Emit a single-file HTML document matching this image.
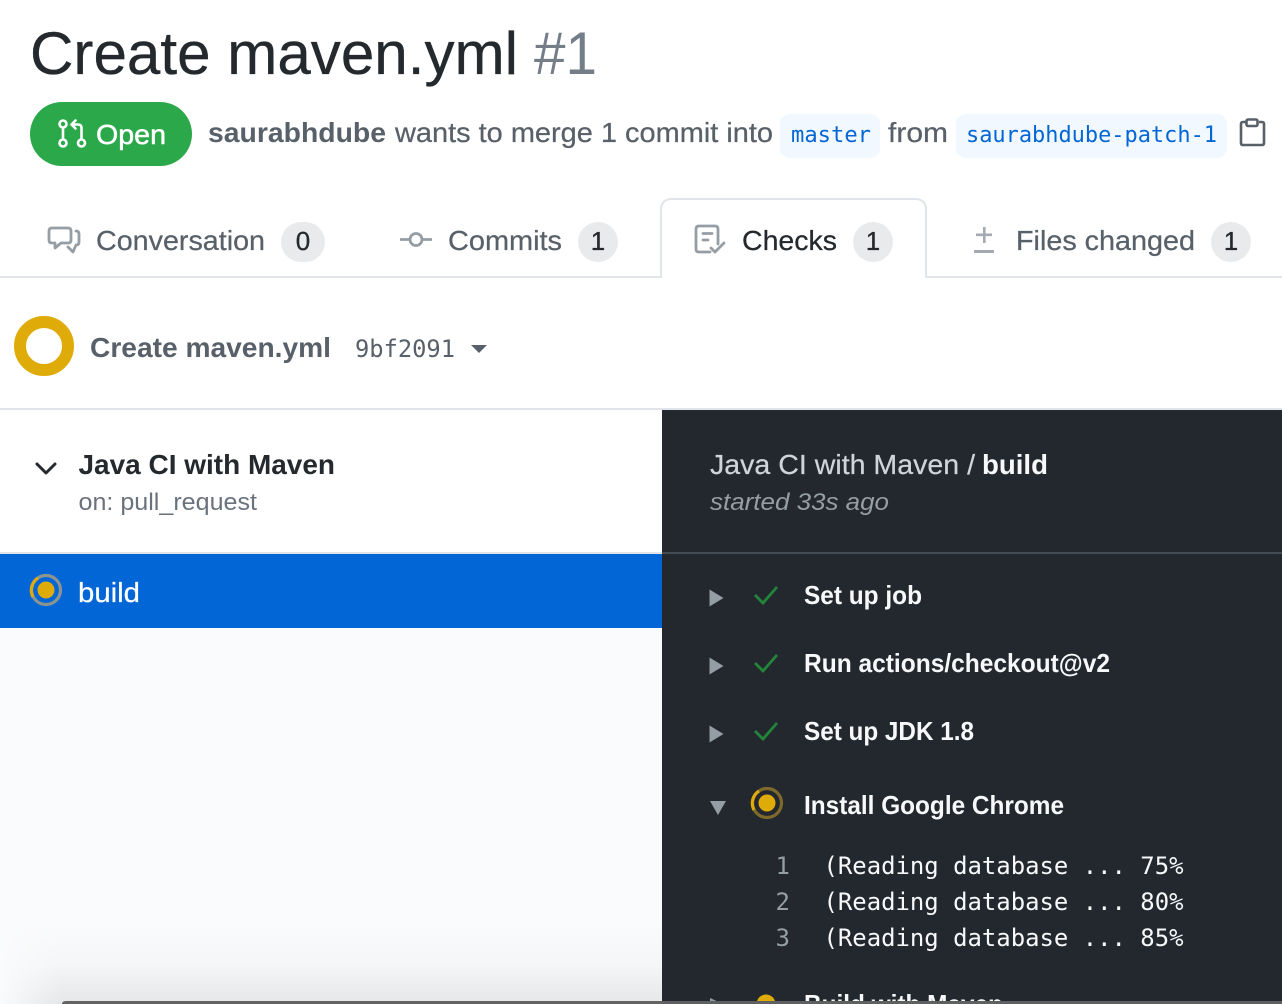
<!DOCTYPE html>
<html><head><meta charset="utf-8"><title>Create maven.yml #1</title>
<style>
html,body{margin:0;padding:0;background:#fff;width:1282px;height:1004px;overflow:hidden}
svg{display:block}
text{font-family:"Liberation Sans",sans-serif;white-space:pre}
.m{font-family:"DejaVu Sans Mono","Liberation Mono",monospace}
.t{font-size:28px;fill:#586069;stroke:#586069;stroke-width:.25px}
.c{font-size:26px;fill:#24292e;text-anchor:middle;stroke:#24292e;stroke-width:.3px}
.s{font-size:26px;font-weight:700;fill:#f6f8fa}
.n{font-size:24px;fill:#959da5;text-anchor:end}
.l{font-size:24px;fill:#f6f8fa}
</style></head><body>
<svg width="1282" height="1004" viewBox="0 0 1282 1004" xmlns="http://www.w3.org/2000/svg">
<defs>
<linearGradient id="sh" x1="0" y1="0" x2="0" y2="1"><stop offset="0" stop-color="#fafbfc"/><stop offset=".5" stop-color="#f5f6f7"/><stop offset="1" stop-color="#e6e7e8"/></linearGradient>
<linearGradient id="shl" x1="0" y1="0" x2="1" y2="0"><stop offset="0" stop-color="#fafbfc"/><stop offset="1" stop-color="#fafbfc" stop-opacity="0"/></linearGradient>
</defs>
<rect width="1282" height="1004" fill="#fff"/>

<text x="30" y="74" font-size="60" fill="#24292e" stroke="#24292e" stroke-width=".3" textLength="488" lengthAdjust="spacingAndGlyphs">Create maven.yml</text>
<text x="534" y="74" font-size="60" fill="#757e88" textLength="63" lengthAdjust="spacingAndGlyphs">#1</text>

<rect x="30" y="102" width="162" height="64" rx="32" fill="#2ba84a"/>
<g fill="none" stroke="#fff" stroke-width="2.6" stroke-linecap="round" stroke-linejoin="round">
<circle cx="63" cy="124" r="3.500"/><circle cx="63" cy="143" r="3.500"/><path d="M63 128V139"/>
<circle cx="81.500" cy="143" r="3.500"/><path d="M81.500 139V128q0-3.500-3.500-3.500H72"/><path d="M75.500 120.500l-4 4 4 4"/>
</g>
<text x="96" y="144" font-size="28" fill="#fff" stroke="#fff" stroke-width=".5" textLength="70" lengthAdjust="spacingAndGlyphs">Open</text>

<text x="208" y="142" font-size="28" font-weight="700" fill="#586069" textLength="178" lengthAdjust="spacingAndGlyphs">saurabhdube</text>
<text class="t" x="395" y="142" textLength="378" lengthAdjust="spacingAndGlyphs">wants to merge 1 commit into</text>
<rect x="780" y="114" width="100" height="44" rx="10" fill="#f1f8ff"/>
<text class="m" x="791" y="142" font-size="22" fill="#0366d6" textLength="80" lengthAdjust="spacingAndGlyphs">master</text>
<text class="t" x="888" y="142" textLength="60" lengthAdjust="spacingAndGlyphs">from</text>
<rect x="956" y="114" width="271" height="44" rx="10" fill="#f1f8ff"/>
<text class="m" x="966" y="142" font-size="22" fill="#0366d6" textLength="251" lengthAdjust="spacingAndGlyphs">saurabhdube-patch-1</text>
<g fill="none" stroke="#586069" stroke-width="2.6" stroke-linejoin="round">
<path d="M1246 122h-3q-2 0-2 2v19q0 2 2 2h19q2 0 2-2v-19q0-2-2-2h-3"/>
<rect x="1246.500" y="119.500" width="11" height="6.500" rx="1.500"/>
</g>

<rect x="0" y="276" width="1282" height="2" fill="#e1e4e8"/>
<path d="M661 278V210q0-11 11-11h243q11 0 11 11v68" fill="#fff" stroke="#e1e4e8" stroke-width="2"/>

<g fill="none" stroke="#959da5" stroke-width="2.800" stroke-linejoin="round" stroke-linecap="round">
<path d="M52 228H68q3 0 3 3V240q0 3-3 3H61l-6 5v-5H52q-3 0-3-3V231q0-3 3-3z"/>
<path d="M76 231q3 0 3 3v8q0 3-3 3H76l-3 7-5-5"/>
</g>
<text class="t" x="96" y="250" textLength="169" lengthAdjust="spacingAndGlyphs">Conversation</text>
<rect x="281" y="222" width="44" height="40" rx="20" fill="#e9eaec"/>
<text class="c" x="303" y="250">0</text>

<g fill="none" stroke="#959da5" stroke-width="2.800"><circle cx="416" cy="239.500" r="6"/><path d="M400 239.500h10M422 239.500h10"/></g>
<text class="t" x="448" y="250" textLength="114" lengthAdjust="spacingAndGlyphs">Commits</text>
<rect x="578" y="222" width="40" height="40" rx="20" fill="#e9eaec"/>
<text class="c" x="598" y="250">1</text>

<g fill="none" stroke="#959da5" stroke-width="2.800" stroke-linecap="round" stroke-linejoin="round">
<path d="M710 252h-11q-3 0-3-3v-20q0-3 3-3h16q3 0 3 3v15"/>
<path d="M703 233.500h9M703 240h5"/>
<path d="M711 248l4 4 9-9"/>
</g>
<text x="742" y="250" font-size="28" fill="#24292e" stroke="#24292e" stroke-width=".25" textLength="95" lengthAdjust="spacingAndGlyphs">Checks</text>
<rect x="853" y="222" width="40" height="40" rx="20" fill="#e9eaec"/>
<text class="c" x="873" y="250">1</text>

<g fill="#a3aab1"><rect x="983" y="227" width="2.600" height="16"/><rect x="976" y="233.500" width="16" height="2.600"/><rect x="974" y="250" width="20" height="3"/></g>
<text class="t" x="1016" y="250" textLength="179" lengthAdjust="spacingAndGlyphs">Files changed</text>
<rect x="1211" y="222" width="40" height="40" rx="20" fill="#e9eaec"/>
<text class="c" x="1231" y="250">1</text>

<circle cx="44" cy="346" r="24" fill="none" stroke="#dfab09" stroke-width="12"/>
<text x="90" y="357" font-size="28" font-weight="700" fill="#586069" textLength="241" lengthAdjust="spacingAndGlyphs">Create maven.yml</text>
<text class="m" x="355" y="357" font-size="24" fill="#586069" textLength="100" lengthAdjust="spacingAndGlyphs">9bf2091</text>
<path d="M471 345h16l-8 8z" fill="#586069"/>

<rect x="0" y="408" width="1282" height="2" fill="#e1e4e8"/>

<path d="M37 464l9 9 9-9" fill="none" stroke="#24292e" stroke-width="3" stroke-linecap="round" stroke-linejoin="round"/>
<text x="78.500" y="474" font-size="28" font-weight="700" fill="#24292e" textLength="256.500" lengthAdjust="spacingAndGlyphs">Java CI with Maven</text>
<text x="78.500" y="510" font-size="24" fill="#6a737d" textLength="178.500" lengthAdjust="spacingAndGlyphs">on: pull_request</text>
<rect x="0" y="552" width="662" height="2" fill="#e1e4e8"/>
<rect x="0" y="554" width="662" height="74" fill="#0366d6"/>
<rect x="0" y="628" width="662" height="376" fill="#fafbfc"/>
<rect x="0" y="925" width="662" height="79" fill="url(#sh)"/>
<rect x="0" y="925" width="60" height="79" fill="url(#shl)"/>

<circle cx="46" cy="590" r="14.500" fill="none" stroke="#8a9490" stroke-width="3.200"/>
<path d="M33 597A14.500 14.500 0 0 1 38 578" fill="none" stroke="#dfab09" stroke-width="3.200"/>
<circle cx="46" cy="590" r="8.500" fill="#dfab09"/>
<text x="78" y="602" font-size="28" fill="#fff" stroke="#fff" stroke-width=".2" textLength="62" lengthAdjust="spacingAndGlyphs">build</text>

<rect x="662" y="410" width="620" height="594" fill="#23282f"/>
<text x="710" y="474" font-size="28" fill="#d1d5da" stroke="#d1d5da" stroke-width=".2" textLength="265" lengthAdjust="spacingAndGlyphs">Java CI with Maven /</text>
<text x="982" y="474" font-size="28" font-weight="700" fill="#f6f8fa" textLength="66" lengthAdjust="spacingAndGlyphs">build</text>
<text x="710" y="510" font-size="24" font-style="italic" fill="#959da5" textLength="179" lengthAdjust="spacingAndGlyphs">started 33s ago</text>
<rect x="662" y="552" width="620" height="2" fill="#444d56"/>

<g fill="#959da5">
<path d="M709.500 589.500l14 8.500-14 8.500z"/><path d="M709.500 657.500l14 8.500-14 8.500z"/><path d="M709.500 725.500l14 8.500-14 8.500z"/>
<path d="M710 801h16l-8 14z"/><path d="M710 998l13 6h-13z"/>
</g>
<g fill="none" stroke="#22863a" stroke-width="2.800">
<path d="M755 595l8 8 14-16"/><path d="M755 663l8 8 14-16"/><path d="M755 731l8 8 14-16"/>
</g>
<text class="s" x="804" y="604" textLength="118" lengthAdjust="spacingAndGlyphs">Set up job</text>
<text class="s" x="804" y="672" textLength="306" lengthAdjust="spacingAndGlyphs">Run actions/checkout@v2</text>
<text class="s" x="804" y="740" textLength="170" lengthAdjust="spacingAndGlyphs">Set up JDK 1.8</text>

<circle cx="767" cy="803" r="14.500" fill="none" stroke="#7d6a2a" stroke-width="3.200"/>
<path d="M754 810A14.500 14.500 0 0 1 759 791" fill="none" stroke="#dfab09" stroke-width="3.200"/>
<circle cx="767" cy="803" r="8.500" fill="#dfab09"/>
<text class="s" x="804" y="814" textLength="260" lengthAdjust="spacingAndGlyphs">Install Google Chrome</text>

<text class="m n" x="790" y="874">1</text><text class="m l" x="823.500" y="874" textLength="360" lengthAdjust="spacingAndGlyphs">(Reading database ... 75%</text>
<text class="m n" x="790" y="910">2</text><text class="m l" x="823.500" y="910" textLength="360" lengthAdjust="spacingAndGlyphs">(Reading database ... 80%</text>
<text class="m n" x="790" y="946">3</text><text class="m l" x="823.500" y="946" textLength="360" lengthAdjust="spacingAndGlyphs">(Reading database ... 85%</text>

<circle cx="766" cy="1004" r="9.500" fill="#dfab09"/>
<text class="s" x="804" y="1013" textLength="199" lengthAdjust="spacingAndGlyphs">Build with Maven</text>

<path d="M62 1004q0-3 4-3H662v3z" fill="#636363"/>
<rect x="662" y="1001" width="620" height="3" fill="#5f6060"/>
</svg>
</body></html>
